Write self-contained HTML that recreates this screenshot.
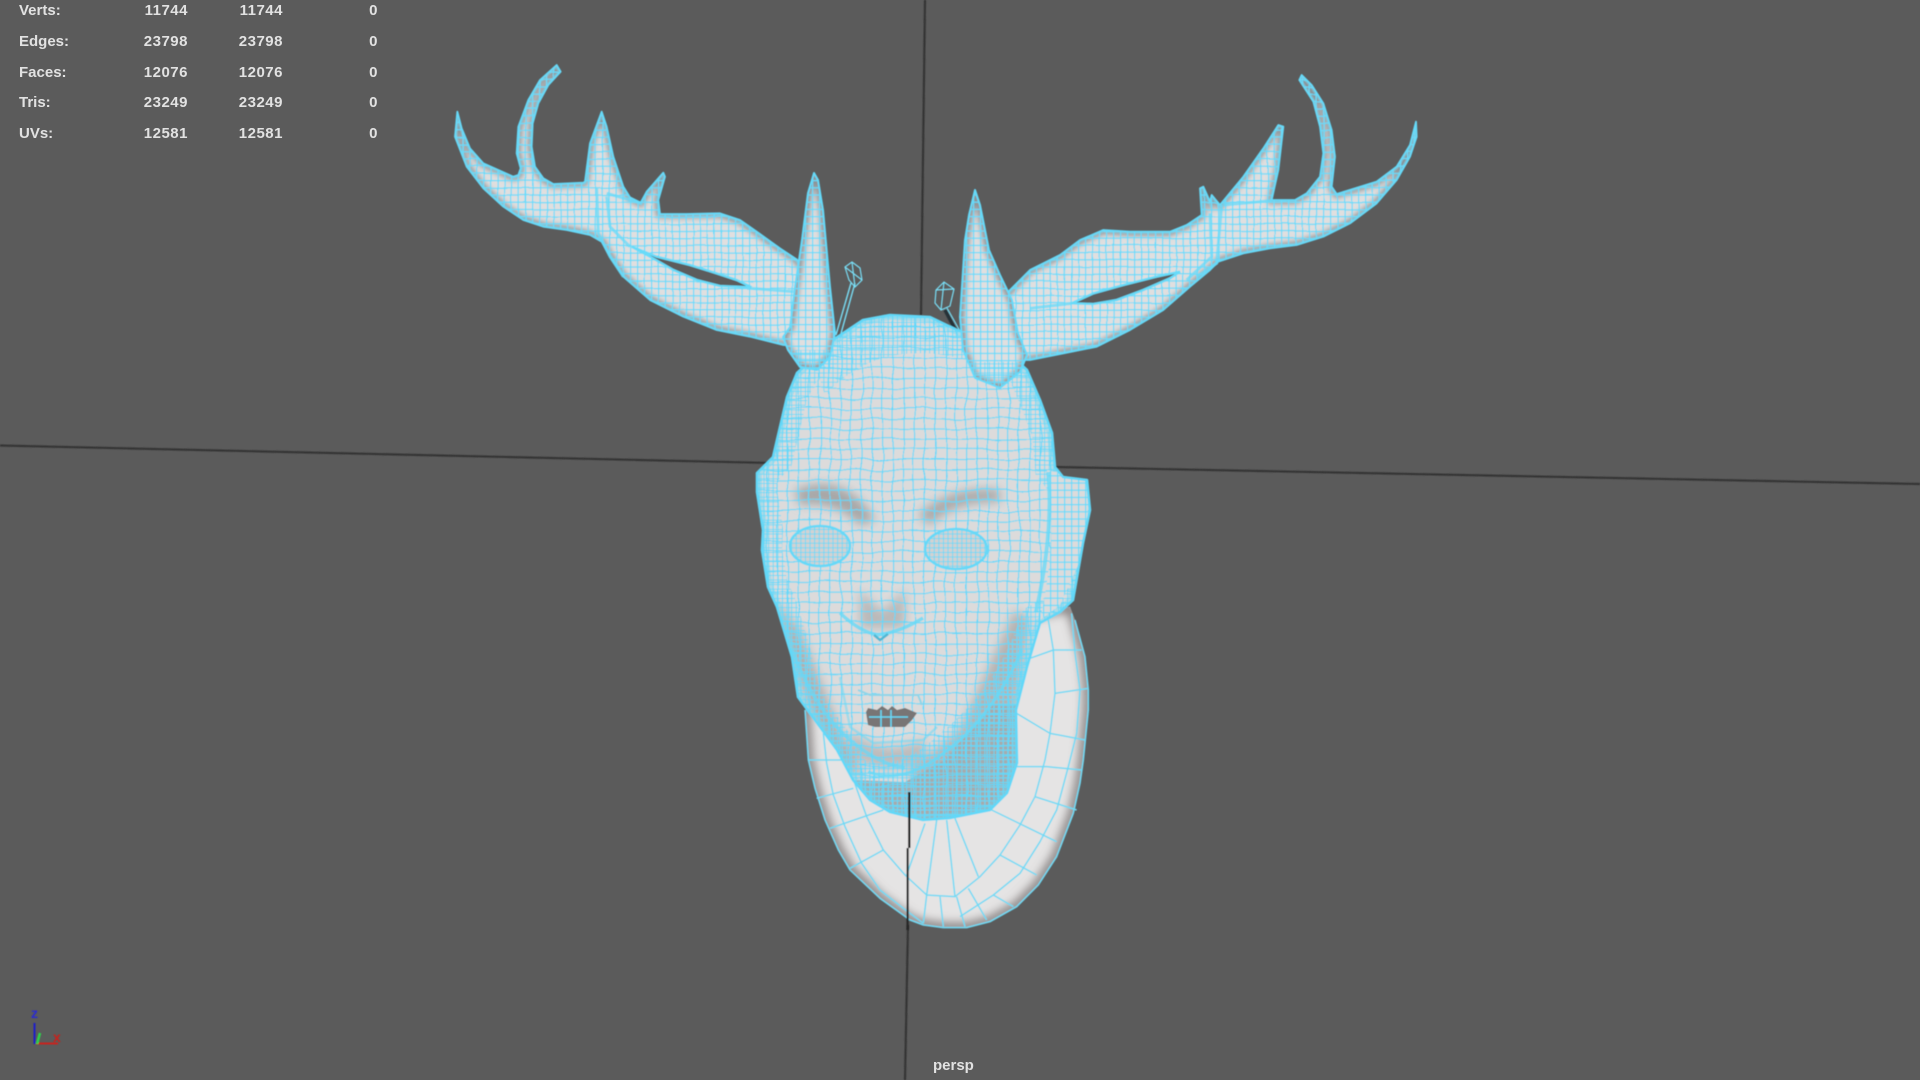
<!DOCTYPE html>
<html><head><meta charset="utf-8"><title>persp</title>
<style>
html,body{margin:0;padding:0;background:#5b5b5b;width:1920px;height:1080px;overflow:hidden}
svg{position:absolute;left:0;top:0;display:block}
.t{position:absolute;font:bold 15px/18px "Liberation Sans",sans-serif;color:#e2e2e2;white-space:nowrap;filter:blur(.35px)}
.r{text-align:right;width:70px;letter-spacing:.5px}
</style></head><body>
<svg width="1920" height="1080" viewBox="0 0 1920 1080" xmlns="http://www.w3.org/2000/svg">
<defs>
<pattern id="m7" width="7" height="7.2" patternUnits="userSpaceOnUse"><path d="M0 0H7M0 0V7.2" stroke="#66dbfb" stroke-width="2.400" fill="none"/></pattern>
<pattern id="m11" width="10.5" height="10.2" patternUnits="userSpaceOnUse"><path d="M0 0H10.5M0 0V10.2" stroke="#60d8fa" stroke-width="2.300" fill="none"/></pattern>
<pattern id="m5" width="4.6" height="4.6" patternUnits="userSpaceOnUse"><path d="M0 0H4.6M0 0V4.6" stroke="#64d9f9" stroke-width="1.700" fill="none"/></pattern>
<filter id="wob" x="-5%" y="-5%" width="110%" height="110%"><feTurbulence type="fractalNoise" baseFrequency=".03" numOctaves="2" seed="4"/><feDisplacementMap in="SourceGraphic" scale="7" xChannelSelector="R" yChannelSelector="G"/></filter>
<filter id="wob2" x="-5%" y="-5%" width="110%" height="110%"><feTurbulence type="fractalNoise" baseFrequency=".03" numOctaves="2" seed="9"/><feDisplacementMap in="SourceGraphic" scale="3" xChannelSelector="R" yChannelSelector="G"/></filter>
<filter id="b1"><feGaussianBlur stdDeviation=".5"/></filter>
<filter id="model" x="350" y="40" width="1150" height="920" filterUnits="userSpaceOnUse"><feGaussianBlur stdDeviation=".55"/></filter>
<filter id="b3" x="-20%" y="-20%" width="140%" height="140%"><feGaussianBlur stdDeviation="3"/></filter>
<filter id="b5" x="-20%" y="-20%" width="140%" height="140%"><feGaussianBlur stdDeviation="5"/></filter>

<path id="aL" transform="translate(450 60) scale(.33333)" d="M22 155L35 205L60 265L100 310L190 350L205 345L212 325L200 280L205 200L235 120L270 60L320 15L332 35L295 75L265 130L248 190L245 260L255 320L280 355L310 372L400 368L405 365L420 250L455 155L470 200L490 290L520 380L540 412L572 428L590 395L640 338L645 350L625 420L630 462L710 462L810 460L870 480L920 515L990 565L1040 598L1120 700L1060 860L1000 855L900 830L800 810L700 770L600 720L520 650L480 590L455 545L420 525L350 510L280 500L220 480L160 440L100 385L50 320L15 230Z"/>
<path id="aR" transform="translate(1030 70) scale(.33333)" d="M1158 155L1140 225L1100 290L1040 335L920 372L905 350L915 260L905 180L880 100L845 45L815 15L808 30L850 95L870 170L880 250L870 320L830 370L795 390L725 390L745 300L760 170L745 165L700 235L640 320L570 405L545 375L540 395L520 350L510 355L515 435L470 465L420 485L300 485L220 480L150 510L90 555L0 600L-90 690L-110 850L-45 870L0 870L100 850L200 830L300 780L400 720L480 650L540 600L565 575L640 550L720 535L800 525L880 500L960 460L1040 400L1100 330L1140 260L1160 200Z"/>
<path id="sL" d="M814 173L808 193L802 240L795 287L790 327L783 337L788 350L800 367L817 370L830 357L835 333L830 287L823 210L818 180Z"/>
<path id="sR" d="M975 190L969 215L965 240L960 317L963 350L975 378L1000 388L1020 372L1027 355L1018 333L1012 300L1000 275L989 250L980 205Z"/>

<path id="head" d="M890 315L863 320L833 340L797 373L787 397L773 457L757 473L757 492L763 530L762 550L768 587L777 607L792 657L798 697L837 750L853 780L870 800L890 812L923 820L950 818L990 810L1007 793L1017 763L1016 710L1027 667L1040 623L1060 612L1073 600L1083 543L1090 510L1087 480L1063 477L1055 467L1052 433L1040 400L1027 370L1000 345L957 330L930 317Z"/>
<path id="neck" d="M853 780L870 800L890 812L923 820L950 818L990 810L1007 793L1017 763L1016 705L990 705L945 760L905 782Z"/>
<path id="pl" transform="translate(760 600) scale(.33333)" d="M930 20L945 60L975 170L985 270L985 330L970 480L960 550L940 640L890 770L835 855L770 920L690 965L620 983L550 983L490 975L450 960L360 895L270 810L235 750L195 660L165 565L145 480L135 330L500 100Z"/>
<clipPath id="caL"><use href="#aL"/></clipPath>
<clipPath id="caR"><use href="#aR"/></clipPath>
<clipPath id="csL"><use href="#sL"/></clipPath>
<clipPath id="csR"><use href="#sR"/></clipPath>
<clipPath id="chead"><use href="#head"/></clipPath>
<clipPath id="cpl"><use href="#pl"/></clipPath>
</defs>

<!-- world axes -->
<g stroke="#363636" stroke-width="2.2" fill="none" filter="url(#b1)">
<path d="M0 445.500L772 463"/><path d="M1055 467L1920 484"/>
<path d="M925 0L921 315"/><path d="M908 925L905 1080"/>
</g>

<g filter="url(#model)">
<!-- plaque -->
<use href="#pl" fill="#e5e4e4"/>
<g clip-path="url(#cpl)"><use href="#pl" fill="none" stroke="#767171" stroke-width="26" filter="url(#b5)"/></g>
<g transform="translate(760 600) scale(.33333)" fill="none" stroke="#70daf5" stroke-width="4.500" stroke-linejoin="round">
<path d="M945 60L975 170L985 270L985 330L970 480L960 550L940 640L890 770L835 855L770 920L690 965L620 983L550 983L490 975L450 960L360 895L270 810L235 750L195 660L165 565L145 480L135 330"/>
<path d="M865 60L880 150L885 280L870 400L855 480L825 590L780 675L720 765L660 830L585 890L500 885L435 825L370 750L320 650L270 510"/>
<path d="M935 40L945 160L960 270L950 400L925 500L890 630L840 725L780 820L700 885L600 950"/>
<path d="M190 400L200 490L220 585L255 680L305 790L360 870L430 925L490 970"/>
<path d="M170 595L280 565M210 685L370 630M270 805L370 750M440 825L495 670M500 885L530 660M585 890L560 660M655 830L585 655M695 630L890 725M720 765L830 825M825 590L950 630M770 500L860 500L965 510M770 340L870 400L975 420M810 175L880 150L965 150M885 280L985 265M490 970L500 885M550 980L540 890M615 980L590 890M625 865L680 960M700 885L760 920M145 480L255 480"/>
</g>

<!-- pins -->
<g fill="none" stroke="#79dff7" stroke-width="1.4">
<path d="M851 283L836 335M855 283L840 337" />
<path d="M845 267L852 262L860 268L862 280L855 287L849 280Z M852 262L855 287M845 267L862 280" stroke-width="1.2"/>
<path d="M936 290L944 282L954 289L950 306L941 310L935 303Z M944 282L941 310M936 290L954 289" stroke-width="1.2"/>
<path d="M945 310L958 335" stroke="#263238" stroke-width="3.500"/>
<path d="M947 308L961 333" stroke-width="1.2"/>
</g>

<!-- antlers L -->
<use href="#aL" fill="#e0dfdf"/>
<g clip-path="url(#caL)">
<use href="#aL" fill="none" stroke="#8a9296" stroke-width="22" filter="url(#b3)"/>
<rect x="440" y="50" width="420" height="340" fill="url(#m7)" filter="url(#wob2)"/>
<use href="#aL" fill="none" stroke="#74dcf8" stroke-width="14" opacity=".5"/>
</g>
<g transform="translate(450 60) scale(.33333)">
<path d="M545 560L620 590L720 615L800 640L860 660L905 682L810 678L740 660L670 630L600 590Z" fill="#5b5b5b"/>
<path d="M545 560L620 590L720 615L800 640L860 660L905 682M905 682L810 678L740 660L670 630L600 590L545 560" fill="none" stroke="#68dbf9" stroke-width="7"/>
<path d="M440 385L445 520L480 590L520 650M470 410L480 500L540 560M905 685L1030 695M470 400L575 430" fill="none" stroke="#68dbf9" stroke-width="9" opacity=".75"/>
</g>
<use href="#aL" fill="none" stroke="#66daf9" stroke-width="5.500" stroke-linejoin="round"/>

<!-- antlers R -->
<use href="#aR" fill="#e0dfdf"/>
<g clip-path="url(#caR)">
<use href="#aR" fill="none" stroke="#8a9296" stroke-width="22" filter="url(#b3)"/>
<rect x="980" y="60" width="440" height="330" fill="url(#m7)" filter="url(#wob2)"/>
<use href="#aR" fill="none" stroke="#74dcf8" stroke-width="14" opacity=".5"/>
</g>
<g transform="translate(1030 70) scale(.33333)">
<path d="M125 700L190 670L280 645L380 620L450 605L420 625L340 660L260 690L190 702Z" fill="#5b5b5b" stroke="#68dbf9" stroke-width="7"/>
<path d="M575 405L560 580L500 620M540 430L545 560L470 630M580 405L725 392M0 715L125 700" fill="none" stroke="#68dbf9" stroke-width="9" opacity=".75"/>
</g>
<use href="#aR" fill="none" stroke="#66daf9" stroke-width="5.500" stroke-linejoin="round"/>

<!-- head -->
<use href="#head" fill="#dcdbdb"/>
<g clip-path="url(#chead)">
<g filter="url(#b5)" fill="#9d9d9d">
<path d="M795 490Q845 470 875 520L860 525Q835 500 800 505Z" opacity=".85"/>
<path d="M918 515Q950 485 1000 490L1000 502Q955 500 930 525Z" opacity=".8"/>
<path d="M860 590L882 612L905 590L905 628L860 628Z" opacity=".55"/>
<path d="M1015 610L1030 620L1016 710L985 765L930 790L905 775L960 730Z" opacity=".65"/>
<path d="M775 600L800 630L840 730L865 780L830 760L790 660Z" opacity=".7"/>
<path d="M850 730Q885 760 925 738L925 760Q885 780 850 755Z" opacity=".5"/>
</g>
<use href="#neck" fill="#a5abad"/>
<use href="#neck" fill="url(#m5)"/>
<rect x="750" y="310" width="345" height="515" fill="url(#m11)" filter="url(#wob)"/>
<use href="#head" fill="none" stroke="url(#m5)" stroke-width="40"/>
<use href="#head" fill="none" stroke="#68daf8" stroke-width="10" opacity=".4"/>
<path d="M815 365Q880 290 1005 350L1000 372Q890 325 825 395Z" fill="url(#m5)"/>
<!-- right ear -->
<path d="M1047 470L1090 480L1085 550L1060 605L1040 620Q1058 540 1047 470Z" fill="#dcdbdb"/>
<path d="M1047 470L1090 480L1085 550L1060 605L1040 620Q1058 540 1047 470Z" fill="url(#m7)"/>
<path d="M1048 472Q1054 530 1036 612" fill="none" stroke="#66d9f8" stroke-width="4" opacity=".75"/>
<!-- jaw band -->
<path d="M1035 620Q1015 690 950 745Q895 795 850 770" fill="none" stroke="url(#m5)" stroke-width="30"/>
<path d="M1022 650Q990 720 945 752Q905 785 868 772" fill="none" stroke="#66d9f8" stroke-width="3" opacity=".8"/>
<path d="M792 650Q815 710 850 740Q880 765 905 768" fill="none" stroke="#66d9f8" stroke-width="3.500" opacity=".7"/>
<!-- eyes -->
<ellipse cx="820" cy="546" rx="30" ry="20" fill="#d2d2d2"/>
<ellipse cx="820" cy="546" rx="30" ry="20" fill="url(#m5)" stroke="#66d9f8" stroke-width="2.600"/>
<ellipse cx="956" cy="549" rx="31" ry="20" fill="#d2d2d2"/>
<ellipse cx="956" cy="549" rx="31" ry="20" fill="url(#m5)" stroke="#66d9f8" stroke-width="2.600"/>
<!-- nose -->
<path d="M840 613Q860 632 878 635Q900 632 923 618" fill="none" stroke="#66d9f8" stroke-width="3.500" opacity=".8"/>
<path d="M874 635L880 640L888 634" fill="none" stroke="#4fb8d4" stroke-width="2.500"/>
<!-- mouth -->
<path d="M858 690L870 695L918 695L922 705" fill="none" stroke="#8fd5e8" stroke-width="2"/>
<path d="M866 712L868 708L877 710L882 706L888 710L892 706L897 710L905 708L917 713L912 720L905 727L875 727L868 725Z" fill="#787474"/>
<path d="M869 717H908M881 710V727M891 710V727" stroke="#66d9f8" stroke-width="1.500" fill="none"/>
<path d="M840 677L850 727L873 743L923 740L937 727" fill="none" stroke="#66d9f8" stroke-width="2.500" opacity=".5"/>
</g>
<use href="#head" fill="none" stroke="#62d8f8" stroke-width="2.600" stroke-linejoin="round"/>

<!-- spikes over head -->
<use href="#sL" fill="#e0dfdf"/>
<g clip-path="url(#csL)">
<use href="#sL" fill="none" stroke="#8a9296" stroke-width="8" filter="url(#b3)"/>
<rect x="780" y="170" width="60" height="205" fill="url(#m7)"/>
<path d="M780 350H840V375H780Z" fill="url(#m5)"/>
</g>
<use href="#sL" fill="none" stroke="#66daf9" stroke-width="2" stroke-linejoin="round"/>
<use href="#sR" fill="#e0dfdf"/>
<g clip-path="url(#csR)">
<use href="#sR" fill="none" stroke="#8a9296" stroke-width="8" filter="url(#b3)"/>
<rect x="950" y="185" width="85" height="210" fill="url(#m7)"/>
<path d="M950 362H1035V395H950Z" fill="url(#m5)"/>
</g>
<use href="#sR" fill="none" stroke="#66daf9" stroke-width="2" stroke-linejoin="round"/>

<!-- black axis through plaque -->
<path d="M909.300 792V848" stroke="#1e1e1e" stroke-width="2.400"/>
<path d="M907.600 848V930" stroke="#252525" stroke-width="2.200"/>
</g>

<!-- view axis -->
<g filter="url(#b1)">
<path d="M34.500 1023V1044" stroke="#1c1ec8" stroke-width="2"/>
<path d="M36 1043.500H58" stroke="#c8201c" stroke-width="2"/>
<path d="M37 1044L40 1033" stroke="#2fd24c" stroke-width="2.500"/>
<text x="31" y="1018" font-family="Liberation Sans" font-weight="bold" font-size="14" fill="#2a2cd0">z</text>
<text x="53" y="1042" font-family="Liberation Sans" font-weight="bold" font-size="14" fill="#c8201c">x</text>
</g>
</svg>

<div class="t" style="left:19px;top:2px">Verts:</div><div class="t r" style="left:118px;top:2px">11744</div><div class="t r" style="left:213px;top:2px">11744</div><div class="t r" style="left:308px;top:2px">0</div>
<div class="t" style="left:19px;top:33px">Edges:</div><div class="t r" style="left:118px;top:33px">23798</div><div class="t r" style="left:213px;top:33px">23798</div><div class="t r" style="left:308px;top:33px">0</div>
<div class="t" style="left:19px;top:64px">Faces:</div><div class="t r" style="left:118px;top:64px">12076</div><div class="t r" style="left:213px;top:64px">12076</div><div class="t r" style="left:308px;top:64px">0</div>
<div class="t" style="left:19px;top:94px">Tris:</div><div class="t r" style="left:118px;top:94px">23249</div><div class="t r" style="left:213px;top:94px">23249</div><div class="t r" style="left:308px;top:94px">0</div>
<div class="t" style="left:19px;top:125px">UVs:</div><div class="t r" style="left:118px;top:125px">12581</div><div class="t r" style="left:213px;top:125px">12581</div><div class="t r" style="left:308px;top:125px">0</div>
<div class="t" style="left:933px;top:1057px">persp</div>
</body></html>
